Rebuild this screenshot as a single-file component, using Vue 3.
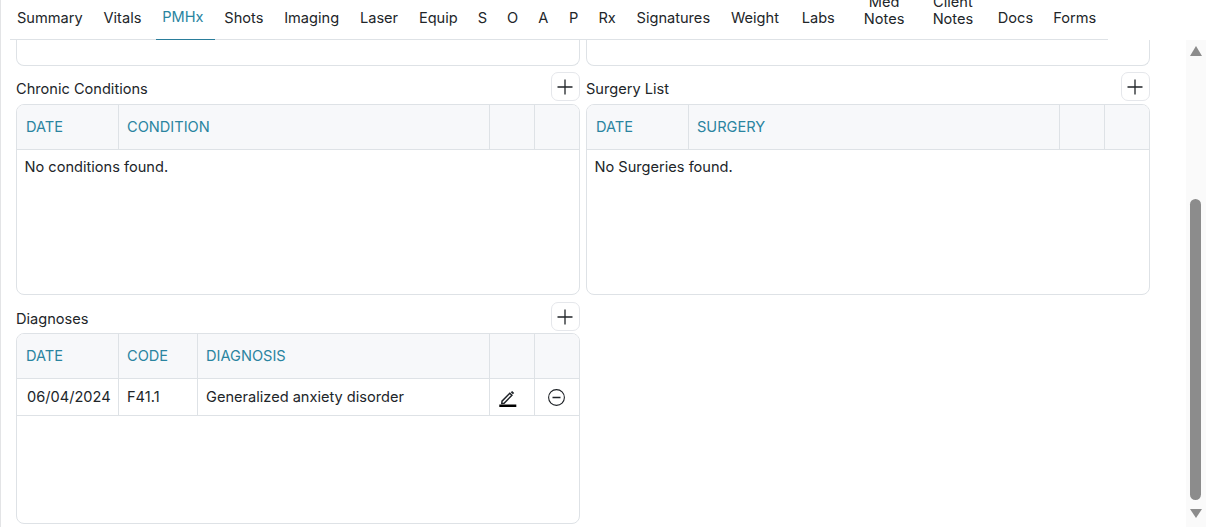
<script setup>
const tabs = [
  { label: 'Summary' }, { label: 'Vitals' }, { label: 'PMHx', cls: 'active' }, { label: 'Shots' },
  { label: 'Imaging' }, { label: 'Laser' }, { label: 'Equip', cls: 'tight' }, { label: 'S', cls: 'tight' },
  { label: 'O', cls: 'tight' }, { label: 'A' }, { label: 'P', cls: 'tight' }, { label: 'Rx' },
  { label: 'Signatures' }, { label: 'Weight', cls: 'loose' }, { label: 'Labs', cls: 'loose' },
  { label: 'Med Notes', cls: 'wrap' }, { label: 'Client Notes', cls: 'wrap after' },
  { label: 'Docs', cls: 'tight' }, { label: 'Forms' }
]
</script>

<template>
  <div class="page">
    <div class="main">
      <nav class="tabs">
        <div v-for="t in tabs" :key="t.label" class="tab" :class="t.cls">{{ t.label }}</div>
      </nav>
      <div class="content">
        <div class="grid top">
          <div class="stub"></div>
          <div class="stub"></div>
        </div>
        <div class="grid row2">
          <section class="panel">
            <header class="panel-head">
              <span class="title">Chronic Conditions</span>
              <button class="add" type="button" aria-label="Add">
                <svg viewBox="0 0 16 16" width="16" height="16"><path d="M8 0.5v15M0.5 8h15" /></svg>
              </button>
            </header>
            <div class="table-box">
              <div class="tr th cond">
                <div class="cell">DATE</div><div class="cell">CONDITION</div><div class="cell"></div><div class="cell"></div>
              </div>
              <div class="empty">No conditions found.</div>
            </div>
          </section>
          <section class="panel">
            <header class="panel-head">
              <span class="title">Surgery List</span>
              <button class="add" type="button" aria-label="Add">
                <svg viewBox="0 0 16 16" width="16" height="16"><path d="M8 0.5v15M0.5 8h15" /></svg>
              </button>
            </header>
            <div class="table-box">
              <div class="tr th cond">
                <div class="cell">DATE</div><div class="cell">SURGERY</div><div class="cell"></div><div class="cell"></div>
              </div>
              <div class="empty">No Surgeries found.</div>
            </div>
          </section>
        </div>
        <div class="grid row3">
          <section class="panel">
            <header class="panel-head short">
              <span class="title">Diagnoses</span>
              <button class="add" type="button" aria-label="Add">
                <svg viewBox="0 0 16 16" width="16" height="16"><path d="M8 0.5v15M0.5 8h15" /></svg>
              </button>
            </header>
            <div class="table-box">
              <div class="tr th diag">
                <div class="cell">DATE</div><div class="cell">CODE</div><div class="cell">DIAGNOSIS</div><div class="cell"></div><div class="cell"></div>
              </div>
              <div class="tr td diag">
                <div class="cell">06/04/2024</div><div class="cell">F41.1</div><div class="cell">Generalized anxiety disorder</div>
                <div class="cell icon">
                  <svg viewBox="0 0 18 18" width="18" height="18" class="ic-edit">
                    <path d="M3 12.200 2.800 14.500l2.300-.3L12.900 6.300 10.800 4.200Z" fill="none" stroke="#1f2328" stroke-width="1.500" />
                    <path d="M11.800 3.200l1.300-1.300 2.100 2.100-1.300 1.300Z" fill="#1f2328" />
                    <rect x="0.300" y="15.500" width="17" height="2.500" fill="#000" />
                  </svg>
                </div>
                <div class="cell icon">
                  <svg viewBox="0 0 17 17" width="17" height="17" class="ic-minus">
                    <circle cx="8.500" cy="8.500" r="7.900" fill="none" stroke="#1f2328" stroke-width="1.100" />
                    <path d="M4.500 8.500h8" stroke="#1f2328" stroke-width="1.300" />
                  </svg>
                </div>
              </div>
            </div>
          </section>
        </div>
      </div>
    </div>
    <aside class="scrollbar">
      <span class="arrow up"></span>
      <div class="track"><div class="thumb"></div></div>
      <span class="arrow down"></span>
    </aside>
  </div>
</template>

<style scoped>
.page {
  width: 1206px;
  height: 527px;
  overflow: hidden;
  display: flex;
  background: #fff;
  box-sizing: border-box;
  border-left: 1px solid #e3e4e6;
  font-family: Inter, "Liberation Sans", sans-serif;
  font-size: 14.6px;
  color: #212529;
}
.main {
  width: 1185px;
  flex: none;
  overflow: hidden;
}
.tabs {
  width: 1098px;
  height: 40px;
  margin-left: 9px;
  padding-left: 1px;
  box-sizing: border-box;
  border-bottom: 1px solid #dee2e6;
  display: flex;
  gap: 3.800px;
}
.tab {
  height: 40px;
  flex: none;
  box-sizing: border-box;
  padding: 0 11px 4px 6px;
  display: flex;
  align-items: center;
  white-space: nowrap;
  line-height: 17px;
}
.tab.tight { padding-right: 10.200px; }
.tab.loose { padding-right: 13px; }
.tab.wrap {
  white-space: normal;
  width: 65px;
  padding: 0 6px 19px;
  text-align: center;
  justify-content: center;
}
.tab.after { margin-right: 2.600px; }
.tab.active {
  color: #2a84a0;
  border-bottom: 1px solid #2a7d9b;
}
.content {
  padding-left: 15px;
  width: 1134px;
}
.grid {
  display: grid;
  grid-template-columns: 564px 564px;
  gap: 6px;
}
.stub {
  height: 26px;
  box-sizing: border-box;
  border: 1px solid #dee2e6;
  border-top: 0;
  border-radius: 0 0 8px 8px;
}
.row2 { margin-top: 6px; }
.row3 { margin-top: 7px; }
.panel-head {
  height: 32px;
  display: flex;
  justify-content: space-between;
  align-items: flex-start;
}
.panel-head.short { height: 31px; }
.title {
  line-height: 17px;
  margin-top: 9px;
}
.add {
  width: 29px;
  height: 29px;
  padding: 0 2px 0 0;
  background: #fff;
  border: 1px solid #e5e7eb;
  border-radius: 7px;
  display: flex;
  align-items: center;
  justify-content: center;
}
.add path {
  fill: none;
  stroke: #212529;
  stroke-width: 1.300;
}
.table-box {
  height: 191px;
  box-sizing: border-box;
  border: 1px solid #dee2e6;
  border-radius: 8px;
  overflow: hidden;
}
.tr {
  display: grid;
  border-bottom: 1px solid #dee2e6;
  box-sizing: border-box;
}
.th {
  height: 45px;
  background: #f7f8fa;
  color: #2a84a0;
}
.td { height: 37px; }
.cond { grid-template-columns: 102px 371px 45px 1fr; }
.diag { grid-template-columns: 102px 79px 292px 45px 1fr; }
.cell {
  display: flex;
  align-items: center;
  padding-left: 8px;
  box-sizing: border-box;
  border-right: 1px solid #dee2e6;
  white-space: nowrap;
  min-width: 0;
}
.th .cell:first-child { padding-left: 9px; }
.td .cell:first-child { padding-left: 10px; }
.cell:last-child { border-right: 0; }
.cell.icon { padding: 0; justify-content: center; }
.ic-edit { margin: 2px 8px 0 0; }
.ic-minus { margin-right: 1px; }
.empty {
  padding: 9px 8px 8px 7.500px;
  line-height: 17px;
}
.scrollbar {
  width: 20px;
  flex: none;
  background: #fafafa;
  display: flex;
  flex-direction: column;
  align-items: center;
  margin-top: 40px;
  height: 487px;
}
.arrow {
  width: 0;
  height: 0;
  margin-right: 1px;
  border-left: 6.500px solid transparent;
  border-right: 6.500px solid transparent;
}
.arrow.up {
  margin-top: 6px;
  border-bottom: 10px solid #8c8c8c;
}
.track { flex: 1; width: 100%; position: relative; }
.thumb {
  position: absolute;
  top: 143px;
  left: 4px;
  width: 11px;
  height: 301px;
  background: #8c8c8c;
  border-radius: 6px;
}
.arrow.down {
  margin-bottom: 9px;
  border-top: 9px solid #8c8c8c;
}
</style>
